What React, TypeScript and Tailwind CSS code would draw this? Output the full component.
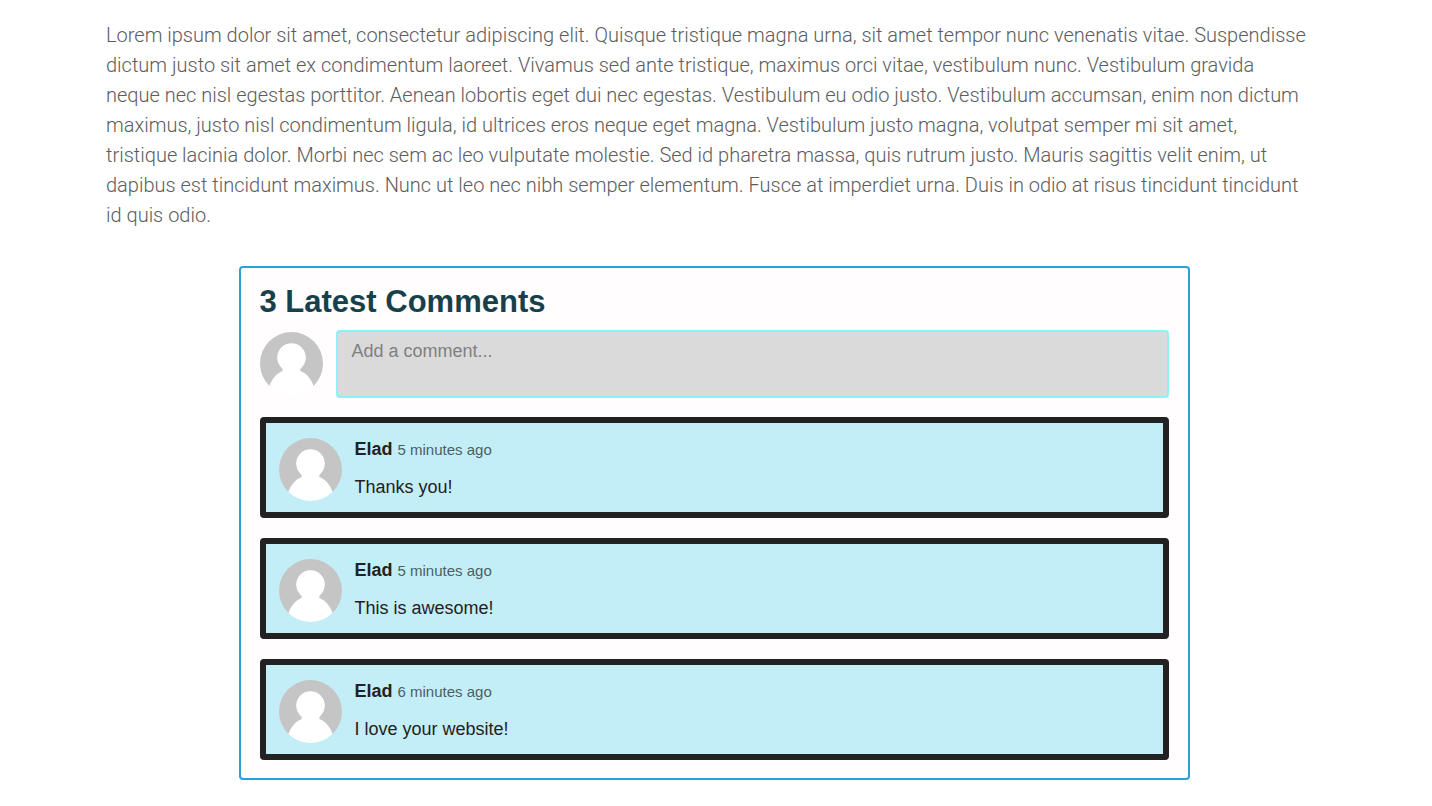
type Comment = {
  id: number;
  author: string;
  time: string;
  text: string;
};

const comments: Comment[] = [
  { id: 1, author: "Elad", time: "5 minutes ago", text: "Thanks you!" },
  { id: 2, author: "Elad", time: "5 minutes ago", text: "This is awesome!" },
  { id: 3, author: "Elad", time: "6 minutes ago", text: "I love your website!" },
];

function Avatar() {
  return (
    <svg viewBox="0 0 64 64" className="size-[63px] shrink-0" aria-hidden="true">
      <defs>
        <clipPath id="avatar-circle">
          <circle cx="32" cy="32" r="32" />
        </clipPath>
      </defs>
      <g clipPath="url(#avatar-circle)">
        <path d="M0 0H64V55H0Z" fill="#c5c5c5" />
        <path d="M9 56C12 47 18 40.500 25 39H39C46 40.500 52 47 55 56V64H9Z" fill="#fff" />
        <ellipse cx="32" cy="26" rx="14.500" ry="14.500" fill="#fff" />
        <path d="M23 36H41V41H23Z" fill="#fff" />
      </g>
    </svg>
  );
}

function CommentCard({ comment }: { comment: Comment }) {
  return (
    <li className="flex gap-[13px] rounded-sm border-6 border-[#222222] bg-[#c3eef7] px-[13px] pt-[15px] pb-[11px]">
      <Avatar />
      <div className="text-lg leading-[22px] text-[#222222]">
        <p>
          <span className="font-bold">{comment.author}</span>{" "}
          <span className="text-[15px] text-[#4d5f63]">{comment.time}</span>
        </p>
        <p className="mt-[15px]">{comment.text}</p>
      </div>
    </li>
  );
}

export default function App() {
  return (
    <main className="bg-white pt-5 pr-7 pb-6 pl-6">
      <p className="mx-auto max-w-[1216px] pr-3 font-['Roboto',sans-serif] text-xl leading-[30px] font-light text-[#5c5c5c]">
        Lorem ipsum dolor sit amet, consectetur adipiscing elit. Quisque tristique magna urna, sit amet tempor nunc
        venenatis vitae. Suspendisse dictum justo sit amet ex condimentum laoreet. Vivamus sed ante tristique, maximus
        orci vitae, vestibulum nunc. Vestibulum gravida neque nec nisl egestas porttitor. Aenean lobortis eget dui nec
        egestas. Vestibulum eu odio justo. Vestibulum accumsan, enim non dictum maximus, justo nisl condimentum ligula,
        id ultrices eros neque eget magna. Vestibulum justo magna, volutpat semper mi sit amet, tristique lacinia dolor.
        Morbi nec sem ac leo vulputate molestie. Sed id pharetra massa, quis rutrum justo. Mauris sagittis velit enim,
        ut dapibus est tincidunt maximus. Nunc ut leo nec nibh semper elementum. Fusce at imperdiet urna. Duis in odio
        at risus tincidunt tincidunt id quis odio.
      </p>

      <section
        aria-labelledby="comments-title"
        className="mx-auto mt-9 max-w-[951px] rounded-sm border-2 border-[#2a9fd8] bg-[#fffdfe] px-[19px] pt-3.5 pb-[18px] font-['Liberation_Sans',Arial,sans-serif]"
      >
        <h2 id="comments-title" className="text-[31px] leading-10 font-bold text-[#17414a]">
          3 Latest Comments
        </h2>

        <form className="mt-2 flex gap-[13px]">
          <div className="pt-0.5">
            <Avatar />
          </div>
          <textarea
            aria-label="Add a comment"
            placeholder="Add a comment..."
            className="h-[68px] grow resize-none rounded-sm border-2 border-[#8af4f4] bg-[#dadada] px-3.5 py-[7px] text-lg leading-6 text-[#222222] outline-none placeholder:text-[#808080]"
          />
        </form>

        <ul className="mt-[19px] flex flex-col gap-5">
          {comments.map((comment) => (
            <CommentCard key={comment.id} comment={comment} />
          ))}
        </ul>
      </section>
    </main>
  );
}
